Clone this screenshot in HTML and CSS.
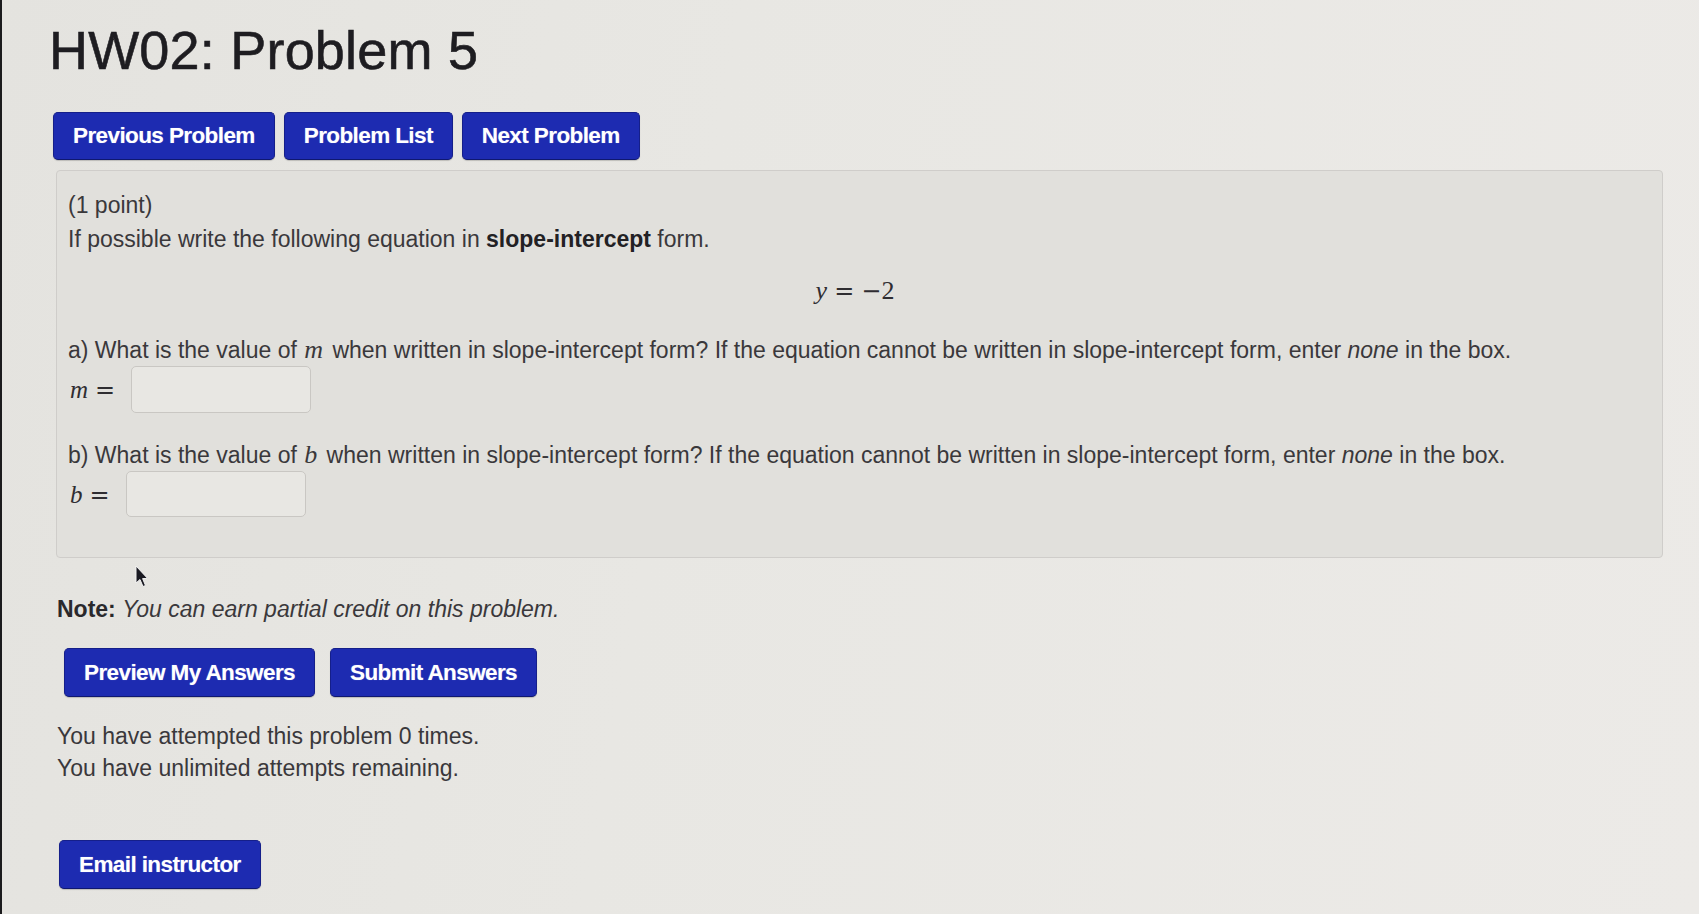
FILE: index.html
```html
<!DOCTYPE html>
<html lang="en">
<head>
<meta charset="utf-8">
<title>HW02: Problem 5</title>
<link rel="stylesheet" href="styles.css">
</head>
<body>
<div class="page">
  <h1 class="title">HW02: Problem 5</h1>

  <nav class="nav-row">
    <a class="btn" href="#">Previous Problem</a>
    <a class="btn" href="#">Problem List</a>
    <a class="btn" href="#">Next Problem</a>
  </nav>

  <div class="problem">
    <div class="line">(1 point)</div>
    <div class="line line-gap">If possible write the following equation in <b class="strong">slope-intercept</b> form.</div>
    <div class="equation"><i class="mvar">y</i><span class="op">=</span><span class="op op-minus">−</span><span class="mnum">2</span></div>

    <div class="line part-a">a) What is the value of <i class="mvar-inline">m</i> when written in slope-intercept form? If the equation cannot be written in slope-intercept form, enter <i>none</i> in the box.</div>
    <div class="answer-row row-m">
      <span class="label"><i class="mvar">m</i><span class="op">=</span></span>
      <input class="answer" type="text" aria-label="m">
    </div>

    <div class="line part-b">b) What is the value of <i class="mvar-inline">b</i> when written in slope-intercept form? If the equation cannot be written in slope-intercept form, enter <i>none</i> in the box.</div>
    <div class="answer-row row-b">
      <span class="label"><i class="mvar">b</i><span class="op">=</span></span>
      <input class="answer" type="text" aria-label="b">
    </div>
  </div>

  <p class="note"><b class="note-label">Note:</b> <i>You can earn partial credit on this problem.</i></p>

  <div class="submit-row">
    <a class="btn btn-big" href="#">Preview My Answers</a>
    <a class="btn btn-big" href="#">Submit Answers</a>
  </div>

  <div class="attempts">
    <div>You have attempted this problem 0 times.</div>
    <div>You have unlimited attempts remaining.</div>
  </div>

  <div class="email-row">
    <a class="btn btn-big" href="#">Email instructor</a>
  </div>

  <svg class="cursor" width="14" height="24" viewBox="0 0 14 24" aria-hidden="true">
    <path d="M1 1 L1 18 L5 14.5 L8 21.5 L10.5 20.5 L7.6 13.6 L12.6 13.4 Z" fill="#1a1a22" stroke="#f2f2f2" stroke-width="1"/>
  </svg>
</div>
</body>
</html>
```

FILE: styles.css
```css
* { box-sizing: border-box; }

html, body {
  margin: 0;
  padding: 0;
}

body {
  background: linear-gradient(100deg, #e4e3df 0%, #e8e7e3 40%, #eceae7 100%);
  font-family: "Liberation Sans", Arial, sans-serif;
  color: #3a383b;
  font-size: 23px;
  line-height: 30px;
}

.page {
  position: relative;
  min-height: 914px;
  padding: 20px 0 0 51px;
  border-left: 2px solid #1b1b1d;
}

.title {
  margin: 0 0 0 -4px;
  font-size: 54px;
  line-height: 60px;
  font-weight: normal;
  color: #1e1d21;
  letter-spacing: 0.2px;
  -webkit-text-stroke: 0.6px #1e1d21;
}

.nav-row {
  display: flex;
  gap: 9px;
  margin-top: 32px;
}

.btn {
  display: inline-flex;
  align-items: center;
  justify-content: center;
  height: 48px;
  padding: 0 19px;
  background: #1d2bb1;
  border: 1px solid #151f8a;
  border-bottom-color: #0f1870;
  border-radius: 5px;
  color: #ffffff;
  font-weight: bold;
  font-size: 22.5px;
  letter-spacing: -0.6px;
  text-decoration: none;
  text-shadow: 0 0 1px rgba(255, 255, 255, 0.4);
  box-shadow: 0 1px 1px rgba(0, 0, 0, 0.18);
}

.problem {
  margin-top: 10px;
  margin-left: 3px;
  width: 1607px;
  padding: 19px 12px 40px 11px;
  background: #e1e0dc;
  border: 1px solid #cfcdca;
  border-radius: 4px;
}

.line { line-height: 30px; }
.line-gap { margin-top: 4px; }

.strong { color: #222124; }

.equation {
  margin-top: 22px;
  text-align: center;
  font-family: "Liberation Serif", "Times New Roman", serif;
  font-size: 26px;
  line-height: 30px;
  color: #2f2d31;
  padding-right: 8px;
}

.mvar {
  font-family: "Liberation Serif", "Times New Roman", serif;
  font-style: italic;
}

.mvar-inline {
  font-family: "Liberation Serif", "Times New Roman", serif;
  font-style: italic;
  font-size: 26px;
  margin: 0 3px 0 1px;
}

.op {
  font-family: "DejaVu Serif", serif;
  font-size: 24px;
  margin: 0 7px;
}

.op-minus { margin: 0; }

.mnum {
  font-family: "Liberation Serif", "Times New Roman", serif;
}

.part-a { margin-top: 29px; }
.part-b { margin-top: 27px; }

.answer-row {
  display: flex;
  align-items: center;
  gap: 9px;
  margin-top: 1px;
}

.label {
  padding-left: 2px;
  font-size: 25px;
  color: #2f2d31;
  line-height: 30px;
}

.answer {
  width: 180px;
  height: 47px;
  background: #e8e7e3;
  border: 1px solid #c9c7c3;
  border-radius: 5px;
  font-size: 20px;
}

.row-b .answer { height: 46px; }

.note {
  margin: 36px 0 0 4px;
  line-height: 30px;
}

.note-label { color: #2a292c; }

.submit-row {
  display: flex;
  gap: 15px;
  margin: 24px 0 0 11px;
}

.btn-big { height: 49px; padding: 0 19px; }

.attempts {
  margin: 23px 0 0 4px;
  line-height: 32px;
}

.email-row {
  margin: 56px 0 0 6px;
}

.cursor {
  position: absolute;
  left: 133px;
  top: 565px;
}
```
